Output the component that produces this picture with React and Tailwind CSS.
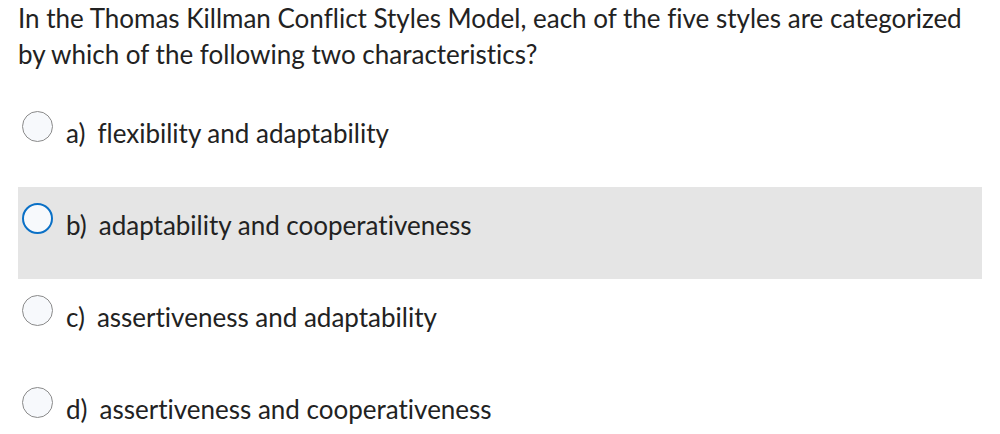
const options = [
  { key: "a)", text: "flexibility and adaptability" },
  { key: "b)", text: "adaptability and cooperativeness", hover: true },
  { key: "c)", text: "assertiveness and adaptability" },
  { key: "d)", text: "assertiveness and cooperativeness" },
];

export default function App() {
  return (
    <div className="w-[1000px] h-[434px] overflow-hidden bg-white pl-[18px] pr-[18px] text-[#222] font-['Lato','Liberation_Sans',sans-serif] [font-variant-ligatures:none]">
      {/* Question */}
      <p className="text-[26px] leading-9 w-[964px]">
        In the Thomas Killman Conflict Styles Model, each of the five styles are categorized by which of the following two characteristics?
      </p>

      {/* Answers */}
      <div className="mt-[23px] flex flex-col">
        {options.map((o) => (
          <div
            key={o.key}
            className={`h-[92px] flex items-start pt-4 pl-1 ${o.hover ? "bg-[#e5e5e5]" : ""}`}
          >
            <span
              className={`w-[31px] h-[31px] rounded-full shrink-0 bg-[#f7f9fc] ${
                o.hover ? "border-2 border-[#0a70c6]" : "border border-[#8a8a8a]"
              }`}
            />
            <span className="ml-[13px] mt-[4px] text-[26px] leading-9">
              <span className="mr-[12px]">{o.key}</span>
              {o.text}
            </span>
          </div>
        ))}
      </div>
    </div>
  );
}
